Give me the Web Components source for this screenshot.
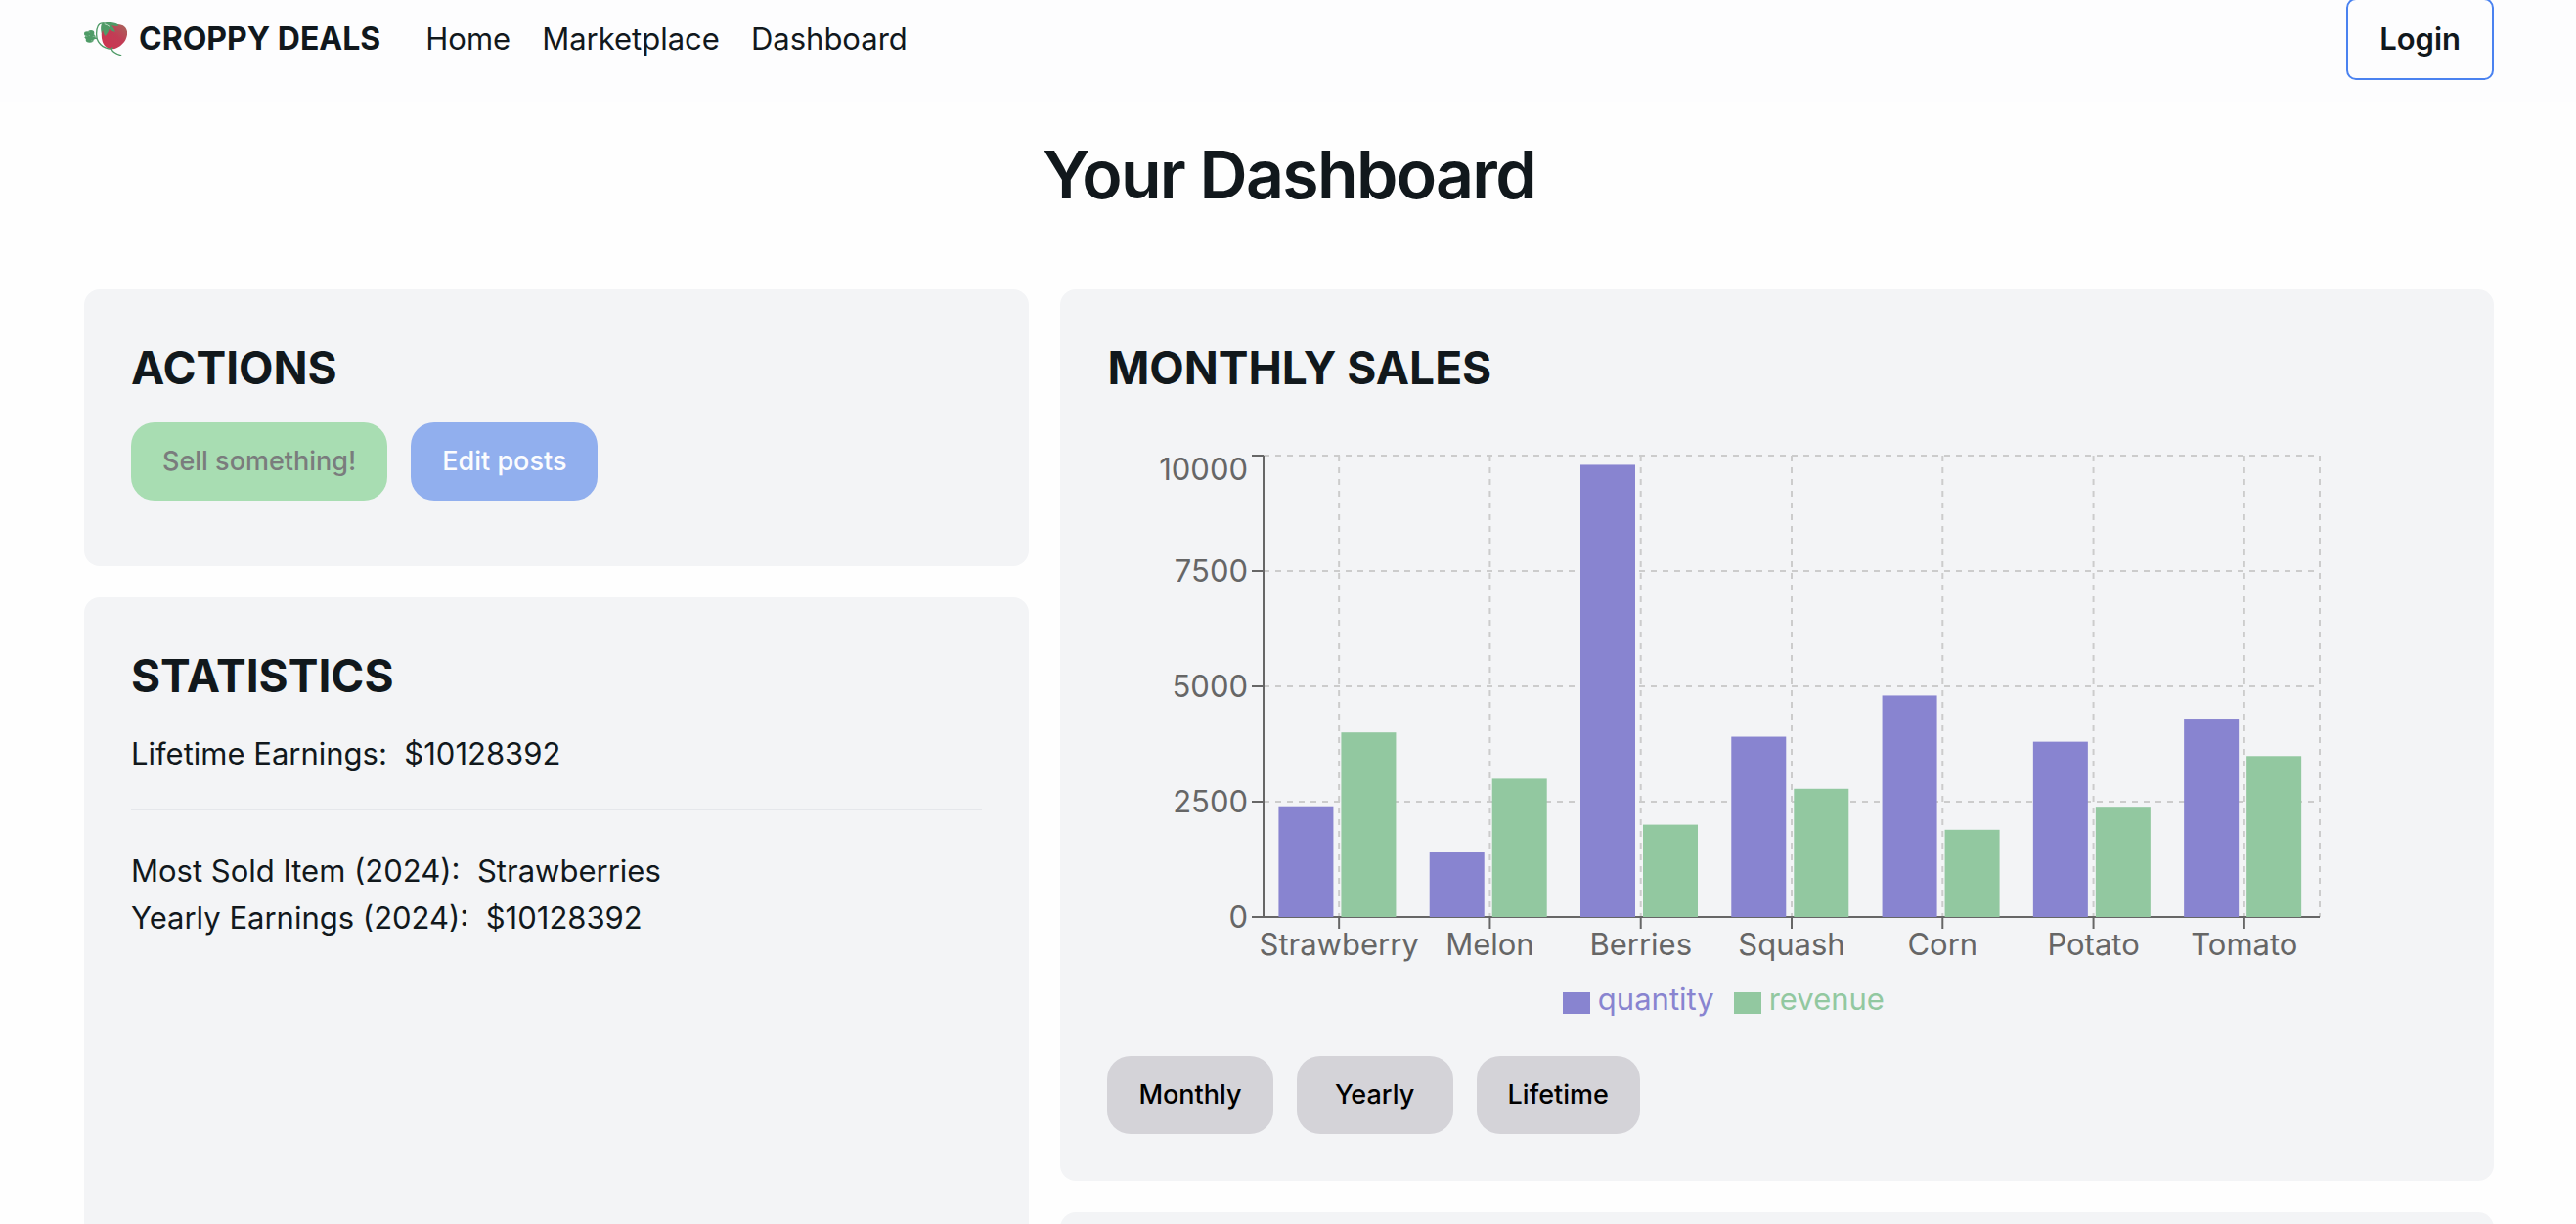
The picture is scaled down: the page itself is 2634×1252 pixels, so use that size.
<!DOCTYPE html>
<html lang="en">
<head>
<meta charset="utf-8">
<title>Croppy Deals</title>
<style>
  html { height: 100%; }
  body { margin: 0; height: 100%; overflow: hidden; background: #fefefe; color: #11181c;
    font: 400 31px/48px Inter, sans-serif; }
</style>
</head>
<body>
<deals-app></deals-app>
<script>
const define = (name, html, setup) => {
  const template = document.createElement('template');
  template.innerHTML = html;
  customElements.define(name, class extends HTMLElement {
    constructor() {
      super();
      this.attachShadow({ mode: 'open' }).append(template.content.cloneNode(true));
    }
    connectedCallback() { if (setup) setup(this, this.shadowRoot); }
  });
};

define('berry-logo', `
<style>:host { display: block; flex: none; width: 44px; height: 34px; } svg { display: block; width: 100%; height: 100%; }</style>
<svg viewBox="0 0 132 102" aria-hidden="true">
  <defs><linearGradient id="g" x1="0" y1="1" x2="1" y2="0">
    <stop offset="0" stop-color="#cf3350"/><stop offset=".55" stop-color="#c23c55"/><stop offset="1" stop-color="#a5695c"/>
  </linearGradient></defs>
  <path fill="url(#g)" d="M58 16C70 4 112 1 125 14c10 10 9 26 2 40-8 14-23 26-39 28-15 1-28-9-32-24-4-14-4-32 2-42z"/>
  <path fill="#4f9b67" d="M56 2C66-1 94-1 102 5c6 4 4 7-2 7l-16-2c6 6 10 12 11 20-8-3-14-6-18-10-2 8-6 15-12 22-5-6-7-12-7-18-3 3-4 7-3 12C50 26 50 8 56 2z"/>
  <path fill="none" stroke="#f6f8f6" stroke-width="2" d="M62 5c6 2 12 4 16 8"/>
  <path fill="none" stroke="#4f9b67" stroke-width="4" stroke-linecap="round" d="M60 3C44 0 37 16 38 38c1 24 18 42 46 44l3-4M84 82c4 9 16 16 29 19M38 50l-6-2"/>
  <g fill="#4f9b67">
    <ellipse cx="21" cy="32" rx="10" ry="8"/><ellipse cx="9" cy="35" rx="9" ry="7"/>
    <ellipse cx="10" cy="46" rx="8" ry="6"/><ellipse cx="17" cy="54" rx="12" ry="8"/>
    <ellipse cx="25" cy="45" rx="10" ry="9"/>
  </g>
  <path fill="none" stroke="#e8f1ea" stroke-width="1" d="M0 41l10 2M13 25l3 7M26 62l-3-8M36 41l-10 3"/>
</svg>`);

define('site-header', `
<style>
  :host { display: block; background: #fdfdfe; padding: 0 84px 24px 86px; }
  header, nav, .brand { display: flex; align-items: center; }
  header { height: 80px; justify-content: space-between; gap: 32px; }
  .start { display: flex; align-items: center; gap: 46px; }
  .brand { gap: 12px; font-weight: 700; font-size: 32px; }
  nav { gap: 32px; }
  a { color: inherit; text-decoration: none; white-space: nowrap; }
  button { font: 600 31px/48px Inter, sans-serif; color: inherit; background: transparent; height: 84px;
    padding: 0 32px; border: 2px solid #4a82f0; border-radius: 10px; }
</style>
<header>
  <div class="start">
    <a class="brand" href="#"><berry-logo></berry-logo>CROPPY DEALS</a>
    <nav><a href="#">Home</a><a href="#">Marketplace</a><a href="#">Dashboard</a></nav>
  </div>
  <button type="button">Login</button>
</header>`);

define('dash-card', `
<style>
  :host { display: block; box-sizing: border-box; padding: 48px; border-radius: 16px; background: #f3f4f6; }
  h2 { margin: 0 0 24px; font: 700 46px/64px Inter, sans-serif; }
</style>
<h2></h2><slot></slot>`, (el, root) => {
  const h = root.querySelector('h2');
  if (el.hasAttribute('heading')) h.textContent = el.getAttribute('heading'); else h.remove();
});

define('pill-button', `
<style>
  :host { display: block; }
  button { display: block; height: 80px; min-width: 160px; padding: 0 32px; border: 0; border-radius: 24px;
    background: #d4d3d8; color: #000; font: 500 27px/40px Inter, sans-serif; }
  :host([tone=green]) button { background: #a8ddb2; color: #7a7c7d; }
  :host([tone=blue]) button { background: #91afee; color: #fbfcfe; }
</style>
<button type="button"><slot></slot></button>`, (el, root) => {
  root.querySelector('button').disabled = el.hasAttribute('disabled');
});

define('sales-chart', `
<style>
  :host { display: block; max-width: 1300px; }
  svg { display: block; width: 100%; }
  text { font: 400 31px Inter, sans-serif; fill: #666; }
  .grid { stroke: #ccc; stroke-width: 2; stroke-dasharray: 6 6; }
  .axis { stroke: #666; stroke-width: 2; }
  ul { display: flex; justify-content: center; gap: 20px; list-style: none; margin: 0; padding: 0 40px 0 0; line-height: 52px; }
  li { display: flex; align-items: center; gap: 8px; }
  i { width: 28px; height: 22px; margin-top: 8px; background: currentColor; }
</style>
<svg viewBox="0 0 1300 564" role="img" aria-label="Monthly sales"></svg>
<ul><li style="color:#8884d0"><i></i>quantity</li><li style="color:#92c8a0"><i></i>revenue</li></ul>`, (el, root) => {
  const rows = [['Strawberry', 2400, 4000], ['Melon', 1398, 3000], ['Berries', 9800, 2000], ['Squash', 3908, 2780],
    ['Corn', 4800, 1890], ['Potato', 3800, 2390], ['Tomato', 4300, 3490]];
  const left = 160, right = 1240, top = 34, bottom = 506, max = 10000;
  const band = (right - left) / rows.length;
  const y = v => bottom - (bottom - top) * v / max;
  const line = (c, x1, y1, x2, y2) => `<line class="${c}" x1="${x1}" y1="${y1}" x2="${x2}" y2="${y2}"/>`;
  let grid = line('grid', right, top, right, bottom), bars = '', axis = '';
  for (let v = 0; v <= max; v += 2500) {
    grid += line('grid', left, y(v), right, y(v));
    axis += line('axis', left - 12, y(v), left, y(v));
    axis += `<text x="${left - 16}" y="${Math.max(y(v) + 11, top + 25)}" text-anchor="end">${v}</text>`;
  }
  rows.forEach(([name, q, r], i) => {
    const x = left + band * i, mid = x + band / 2;
    grid += line('grid', mid, top, mid, bottom);
    axis += line('axis', mid, bottom, mid, bottom + 12);
    axis += `<text x="${mid}" y="${bottom + 39}" text-anchor="middle">${name}</text>`;
    bars += `<rect x="${x + band / 10}" y="${y(q)}" width="56" height="${bottom - y(q)}" fill="#8884d0"/>`;
    bars += `<rect x="${x + band / 10 + 64}" y="${y(r)}" width="56" height="${bottom - y(r)}" fill="#92c8a0"/>`;
  });
  axis += line('axis', left, top, left, bottom) + line('axis', left, bottom, right, bottom);
  root.querySelector('svg').innerHTML = grid + axis + bars;
});

define('deals-app', `
<style>
  :host { display: block; height: 100vh; overflow: hidden; }
  h1 { margin: 0; padding: 34px 84px 78px 86px; text-align: center; font: 600 68px/80px Inter, sans-serif; letter-spacing: -0.025em; }
  main { display: grid; grid-template-columns: repeat(5, 1fr); gap: 32px; padding: 0 84px 32px 86px; }
  .col { display: flex; flex-direction: column; gap: 32px; min-width: 0; }
  .side { grid-column: span 2; }
  .wide { grid-column: span 3; }
  .row { display: flex; gap: 24px; }
  .actions { padding-bottom: 67px; }
  .stats { flex: 1; }
  .periods { margin-top: 32px; }
  .more { min-height: 400px; }
  p { margin: 0; }
  hr { height: 2px; margin: 32px 0 38px; border: 0; background: #e5e7eb; }
</style>
<site-header></site-header>
<h1>Your Dashboard</h1>
<main>
  <div class="col side">
    <dash-card class="actions" heading="ACTIONS">
      <div class="row"><pill-button tone="green" disabled>Sell something!</pill-button><pill-button tone="blue" disabled>Edit posts</pill-button></div>
    </dash-card>
    <dash-card class="stats" heading="STATISTICS">
      <p>Lifetime Earnings:&nbsp; $10128392</p>
      <hr>
      <p>Most Sold Item (2024):&nbsp; Strawberries</p>
      <p>Yearly Earnings (2024):&nbsp; $10128392</p>
    </dash-card>
  </div>
  <div class="col wide">
    <dash-card heading="MONTHLY SALES">
      <sales-chart></sales-chart>
      <div class="row periods"><pill-button>Monthly</pill-button><pill-button>Yearly</pill-button><pill-button>Lifetime</pill-button></div>
    </dash-card>
    <dash-card class="more"></dash-card>
  </div>
</main>`);
</script>
</body>
</html>
